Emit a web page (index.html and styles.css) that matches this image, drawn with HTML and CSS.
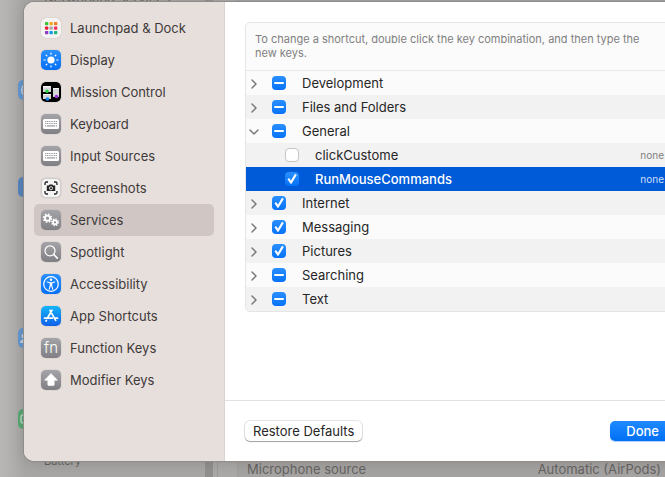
FILE: index.html
```
<!DOCTYPE html>
<html lang="en">
<head>
  <meta charset="utf-8">
  <title>Keyboard Shortcuts</title>
  <link rel="stylesheet" href="styles.css">
</head>
<body>
  <!-- settings window behind the sheet -->
  <div class="backdrop">
    <ul class="back-list">
      <li class="back-title">Networking services</li>
      <li class="back-icon">
        <svg width="20" height="20" viewBox="0 0 20 20" fill="none" stroke="#c3d0de" stroke-width="1.2"><circle cx="10" cy="10" r="6.5"/><ellipse cx="10" cy="10" rx="3" ry="6.5"/><path d="M3.5 10h13"/></svg>
      </li>
      <li class="back-icon back-dark">
        <svg width="20" height="20" viewBox="0 0 20 20"><rect x="5" y="5" width="10" height="10" fill="#a9bdd4"/></svg>
      </li>
      <li class="back-icon">
        <svg width="20" height="20" viewBox="0 0 20 20" fill="#c3d0de"><circle cx="6" cy="8" r="2.5"/><path d="M2 15c0-5 8-5 8 0z"/><circle cx="13" cy="7" r="3"/><path d="M8 16c0-7 10-7 10 0z"/></svg>
      </li>
      <li class="back-icon back-green">
        <svg width="20" height="20" viewBox="0 0 20 20" fill="none" stroke="#b5d5c0" stroke-width="1.5"><rect x="3" y="6" width="13" height="8" rx="2"/><path d="M6 8v4" stroke-width="2"/></svg>
      </li>
      <li>Battery</li>
    </ul>
    <div class="back-scroll"></div>
    <div class="back-main">
      <span>Microphone source</span>
      <span>Automatic (AirPods)</span>
    </div>
  </div>

  <div class="sheet">
    <nav class="sidebar">
      <a href="#launchpad">
        <svg class="icon" viewBox="0 0 20 20"><rect width="20" height="20" rx="4.5" fill="#f5f3f2"/><rect x="4" y="4" width="3.3" height="3.3" rx=".8" fill="#36c43a"/><rect x="8.5" y="4" width="3.3" height="3.3" rx=".8" fill="#f5a51b"/><rect x="13" y="4" width="3.3" height="3.3" rx=".8" fill="#f57a22"/><rect x="4" y="8.5" width="3.3" height="3.3" rx=".8" fill="#ea1c35"/><rect x="8.5" y="8.5" width="3.3" height="3.3" rx=".8" fill="#a8a8aa"/><rect x="13" y="8.5" width="3.3" height="3.3" rx=".8" fill="#f52b58"/><rect x="4" y="13" width="3.3" height="3.3" rx=".8" fill="#8d3cc4"/><rect x="8.5" y="13" width="3.3" height="3.3" rx=".8" fill="#1296e6"/><rect x="13" y="13" width="3.3" height="3.3" rx=".8" fill="#19b77a"/></svg>
        Launchpad &amp; Dock
      </a>
      <a href="#display">
        <svg class="icon blue" viewBox="0 0 20 20"><circle cx="10" cy="10" r="3.6" fill="#fff"/><path d="M10 3v1.2M10 15.8V17M3 10h1.2M15.8 10H17M5.1 5.1l.8.8M14.1 14.1l.8.8M5.1 14.9l.8-.8M14.1 5.900l.8-.8" stroke="#fff" stroke-width="1.2" stroke-linecap="round"/></svg>
        Display
      </a>
      <a href="#mission">
        <svg class="icon" viewBox="0 0 20 20"><rect width="20" height="20" rx="4.5" fill="#000"/><path d="M2 4h8v6H2zM2 12h8v5H2zM12 6h6v9h-6z" fill="#d5d4d8"/><path d="M2 4h8v1.5H2zM2 12h8v1H2zM12 6h6v1h-6z" fill="#f5f5f5"/><circle cx="6" cy="9.3" r="1.8" fill="#26d94b"/><circle cx="6.5" cy="17" r="1.8" fill="#168cf5"/><circle cx="15.5" cy="14.5" r="1.8" fill="#9a37d4"/></svg>
        Mission Control
      </a>
      <a href="#keyboard">
        <svg class="icon gray" viewBox="0 0 20 20"><rect x="2" y="5" width="16" height="10" rx="1.5" fill="#fff"/><path d="M4 7.5h12M4 9.5h12" stroke="#9c9ca2" stroke-width="1.2" stroke-dasharray="1.2 .6"/><path d="M4 11.8h1.2M6 11.8h8M14.8 11.8H16" stroke="#9c9ca2" stroke-width="1.2"/></svg>
        Keyboard
      </a>
      <a href="#input">
        <svg class="icon gray" viewBox="0 0 20 20"><rect x="2" y="5" width="16" height="10" rx="1.5" fill="#fff"/><path d="M4 7.5h12M4 9.5h12" stroke="#9c9ca2" stroke-width="1.2" stroke-dasharray="1.2 .6"/><path d="M4 11.8h1.2M6 11.8h8M14.8 11.8H16" stroke="#9c9ca2" stroke-width="1.2"/></svg>
        Input Sources
      </a>
      <a href="#screenshots">
        <svg class="icon" viewBox="0 0 20 20"><rect x=".5" y=".5" width="19" height="19" rx="4.5" fill="#f4f4f4" stroke="#cfcccb"/><path d="M4 7V5.5Q4 4 5.5 4H7M13 4h1.5Q16 4 16 5.5V7M16 13v1.5q0 1.5-1.5 1.5H13M7 16H5.5Q4 16 4 14.5V13" fill="none" stroke="#222" stroke-width="1.3"/><path d="M5.800 7.600h2l.8-1.200h2.800l.8 1.200h2v5.400H5.800z" fill="#222"/><circle cx="10" cy="10.2" r="1.6" fill="#222" stroke="#f4f4f4" stroke-width=".9"/></svg>
        Screenshots
      </a>
      <a href="#services" class="active" aria-current="page">
        <svg class="icon gray" viewBox="0 0 20 20" fill="none" stroke="#fff"><circle cx="6.5" cy="8.2" r="2.6" stroke-width="1.9"/><circle cx="6.5" cy="8.2" r="4" stroke-width="1.5" stroke-dasharray="1.57"/><circle cx="14" cy="12.3" r="2" stroke-width="1.8"/><circle cx="14" cy="12.3" r="3.3" stroke-width="1.4" stroke-dasharray="1.3"/></svg>
        Services
      </a>
      <a href="#spotlight">
        <svg class="icon gray" viewBox="0 0 20 20" fill="none" stroke="#fff" stroke-linecap="round"><circle cx="9" cy="8.8" r="5" stroke-width="1.2"/><path d="M12.7 12.5l3.6 3.6" stroke-width="1.6"/></svg>
        Spotlight
      </a>
      <a href="#accessibility">
        <svg class="icon blue" viewBox="0 0 20 20"><circle cx="10" cy="10" r="7.3" fill="none" stroke="#fff" stroke-width="1.2"/><circle cx="10" cy="5.8" r="1.2" fill="#fff"/><path d="M6.300 8l2.600.7h2.200l2.600-.7M9.300 8.700v3l-1.100 3.600M10.700 8.700v3l1.100 3.600M10 8.700v3" fill="none" stroke="#fff" stroke-width="1.1" stroke-linecap="round"/></svg>
        Accessibility
      </a>
      <a href="#shortcuts">
        <svg class="icon store" viewBox="0 0 20 20" fill="none" stroke="#fff" stroke-width="1.7" stroke-linecap="round"><path d="M11 4.300L6.500 12M9 4.300l5.700 10M3.500 12.200h7.800M14 12.200h2.500M5.400 14.300l-.4.700"/></svg>
        App Shortcuts
      </a>
      <a href="#function">
        <span class="icon gray fn">fn</span>
        Function Keys
      </a>
      <a href="#modifier">
        <svg class="icon gray" viewBox="0 0 20 20"><path d="M10 3.500l6.500 6.700h-3.300v4.600q0 .7-.7.7h-5q-.7 0-.7-.7v-4.600H3.500z" fill="#fff" stroke="#fff" stroke-width=".6" stroke-linejoin="round"/></svg>
        Modifier Keys
      </a>
    </nav>

    <main class="content">
      <div class="panel">
        <p class="hint">To change a shortcut, double click the key combination, and then type the new keys.</p>
        <table class="services">
          <tr>
            <td class="toggle"><button aria-label="Expand Development"><svg viewBox="0 0 10 10"><path d="M3 1l4 4-4 4"/></svg></button></td>
            <td><input type="checkbox" class="mixed" id="development"><label for="development">Development</label></td>
            <td class="key"></td>
          </tr>
          <tr>
            <td class="toggle"><button aria-label="Expand Files and Folders"><svg viewBox="0 0 10 10"><path d="M3 1l4 4-4 4"/></svg></button></td>
            <td><input type="checkbox" class="mixed" id="files"><label for="files">Files and Folders</label></td>
            <td class="key"></td>
          </tr>
          <tr>
            <td class="toggle"><button aria-label="Collapse General"><svg viewBox="0 0 10 10"><path d="M1 3l4 4 4-4"/></svg></button></td>
            <td><input type="checkbox" class="mixed" id="general"><label for="general">General</label></td>
            <td class="key"></td>
          </tr>
          <tr class="child">
            <td class="toggle"></td>
            <td><input type="checkbox" id="click"><label for="click">clickCustome</label></td>
            <td class="key">none</td>
          </tr>
          <tr class="child selected">
            <td class="toggle"></td>
            <td><input type="checkbox" id="mouse" checked><label for="mouse">RunMouseCommands</label></td>
            <td class="key">none</td>
          </tr>
          <tr>
            <td class="toggle"><button aria-label="Expand Internet"><svg viewBox="0 0 10 10"><path d="M3 1l4 4-4 4"/></svg></button></td>
            <td><input type="checkbox" id="internet" checked><label for="internet">Internet</label></td>
            <td class="key"></td>
          </tr>
          <tr>
            <td class="toggle"><button aria-label="Expand Messaging"><svg viewBox="0 0 10 10"><path d="M3 1l4 4-4 4"/></svg></button></td>
            <td><input type="checkbox" id="messaging" checked><label for="messaging">Messaging</label></td>
            <td class="key"></td>
          </tr>
          <tr>
            <td class="toggle"><button aria-label="Expand Pictures"><svg viewBox="0 0 10 10"><path d="M3 1l4 4-4 4"/></svg></button></td>
            <td><input type="checkbox" id="pictures" checked><label for="pictures">Pictures</label></td>
            <td class="key"></td>
          </tr>
          <tr>
            <td class="toggle"><button aria-label="Expand Searching"><svg viewBox="0 0 10 10"><path d="M3 1l4 4-4 4"/></svg></button></td>
            <td><input type="checkbox" class="mixed" id="searching"><label for="searching">Searching</label></td>
            <td class="key"></td>
          </tr>
          <tr>
            <td class="toggle"><button aria-label="Expand Text"><svg viewBox="0 0 10 10"><path d="M3 1l4 4-4 4"/></svg></button></td>
            <td><input type="checkbox" class="mixed" id="text"><label for="text">Text</label></td>
            <td class="key"></td>
          </tr>
        </table>
      </div>
      <footer>
        <button class="button">Restore Defaults</button>
        <button class="button primary">Done</button>
      </footer>
    </main>
  </div>

  <script>
    // groups with only some services turned on
    document.querySelectorAll('.mixed').forEach(box => {
      box.indeterminate = true;
    });
  </script>
</body>
</html>
```

FILE: styles.css
```
* {
  box-sizing: border-box;
}
body {
  margin: 0;
  padding: 2px 0 16px 24px;
  min-height: 100vh;
  display: flex;
  position: relative;
  overflow: hidden;
  font-family: Inter, "Liberation Sans", sans-serif;
  font-size: 13px;
  line-height: 16px;
  color: #262626;
}
button {
  font: inherit;
  color: inherit;
}

/* window behind */
.backdrop {
  position: absolute;
  inset: 0;
  display: flex;
  background: #acaaa8;
  color: #666462;
  overflow: hidden;
}
.back-list {
  list-style: none;
  margin: -10px 0 0;
  padding: 0 0 0 18px;
  width: 205px;
  display: grid;
  grid-template-rows: 90px 97px 151px 81px 44px 1fr;
  align-items: start;
  font-size: 11px;
  background: linear-gradient(to right, #b8b7b5, #a9a7a5 24px);
}
.back-list li {
  padding-left: 26px;
}
.back-list .back-title {
  font-size: 13px;
}
.back-list .back-icon {
  padding: 0;
  width: 20px;
  height: 20px;
  border-radius: 5px;
  background: #6396cf;
}
.back-list .back-dark {
  background: #5584bd;
}
.back-list .back-green {
  background: #58a873;
}
.back-scroll {
  width: 13px;
  border-left: 8px solid #929190;
  border-right: 1px solid #9c9b99;
}
.back-main {
  flex: 1;
  display: flex;
  justify-content: space-between;
  align-items: flex-end;
  margin-left: 19px;
  padding: 0 4px 0 9px;
  border-left: 1px solid #a19f9d;
  background: #a6a4a2;
}

/* sheet, runs past the right edge of the window */
.sheet {
  position: relative;
  flex: 1;
  display: flex;
  margin-right: -30px;
  border-radius: 10px;
  background: #fff;
  box-shadow: 0 0 0 1px #8f8c8a, 0 2px 16px rgba(0, 0, 0, 0.15);
}
.sidebar {
  width: 201px;
  padding: 10px;
  border-right: 1px solid #dbd3d0;
  border-radius: 10px 0 0 10px;
  background: #e7dfdc;
}
.sidebar a {
  display: flex;
  align-items: center;
  gap: 9px;
  height: 32px;
  padding-left: 7px;
  border-radius: 5px;
  color: #3e3a39;
  text-decoration: none;
}
.sidebar .active {
  background: #d0c7c4;
}
.icon {
  width: 20px;
  height: 20px;
  border-radius: 5px;
  box-shadow: 0 0 1px rgba(0, 0, 0, 0.4);
}
.blue {
  background: linear-gradient(#2a90ff, #0570f5);
}
.gray {
  background: linear-gradient(#a3a3a8, #7f7f84);
}
.store {
  background: linear-gradient(#12b5fa, #1260e8);
}
.fn {
  color: #fff;
  font-size: 15px;
  font-weight: 300;
  line-height: 20px;
  text-align: center;
}

.content {
  flex: 1;
  display: flex;
  flex-direction: column;
  justify-content: space-between;
}
.panel {
  margin: 20px 20px 0;
  border: 1px solid #e5e5e5;
  border-radius: 5px;
  background: #fbfbfb;
  overflow: hidden;
}
.hint {
  margin: 0;
  padding: 9px 20px 10px 9px;
  border-bottom: 1px solid #e9e9e9;
  font-size: 11px;
  line-height: 14px;
  color: #808080;
}
.services {
  width: 100%;
  border-collapse: collapse;
}
.services td {
  height: 24px;
  padding: 0;
}
.services tr:nth-child(even) {
  background: #f2f2f2;
}
.services tr:nth-child(6),
.services tr:nth-child(8) {
  background: #f2f2f2;
}
.services .toggle {
  width: 26px;
}
.toggle button {
  display: block;
  margin-left: 3px;
  padding: 2px 0 0;
  border: 0;
  background: none;
}
.toggle svg {
  display: block;
  width: 10px;
  height: 10px;
  fill: none;
  stroke: #7a7a7a;
  stroke-width: 1.5;
  stroke-linecap: round;
  stroke-linejoin: round;
}
.services label {
  vertical-align: middle;
}
.services .key {
  padding-right: 10px;
  text-align: right;
  font-size: 10px;
  color: #808080;
}
.child td:nth-child(2) {
  padding-left: 13px;
}
.services .selected {
  background: #005bd8;
  color: #fff;
  font-weight: 500;
}
.services .selected .key {
  color: #ccdff8;
  font-weight: 400;
}

input[type="checkbox"] {
  appearance: none;
  display: inline-grid;
  place-items: center;
  width: 14px;
  height: 14px;
  margin: 0 16px 2px 0;
  vertical-align: middle;
  border: 1px solid #c6c6c6;
  border-radius: 4px;
  background: #fff;
}
input[type="checkbox"]:checked,
input[type="checkbox"]:indeterminate {
  border: 0;
  background: linear-gradient(#2a8fff, #0572f8);
}
input:checked::before {
  content: "";
  width: 10px;
  height: 10px;
  background: #fff;
  clip-path: polygon(5% 55%, 20% 42%, 40% 67%, 80% 0, 98% 12%, 45% 100%, 35% 100%);
}
input:indeterminate::before {
  content: "";
  width: 10px;
  height: 2px;
  border-radius: 1px;
  background: #fff;
}

footer {
  display: flex;
  justify-content: space-between;
  align-items: center;
  height: 61px;
  padding: 0 20px;
  border-top: 1px solid #e2e2e2;
}
.button {
  height: 20px;
  padding: 0 8px;
  border: 0;
  border-radius: 5px;
  background: #fff;
  line-height: 20px;
  box-shadow: 0 0 0 1px rgba(0, 0, 0, 0.1), 0 1px 1px rgba(0, 0, 0, 0.3);
}
.primary {
  padding: 0 16px;
  background: linear-gradient(#2089ff, #0070f5);
  color: #fff;
  font-weight: 500;
  box-shadow: 0 1px 1px rgba(0, 90, 220, 0.3);
}
```
